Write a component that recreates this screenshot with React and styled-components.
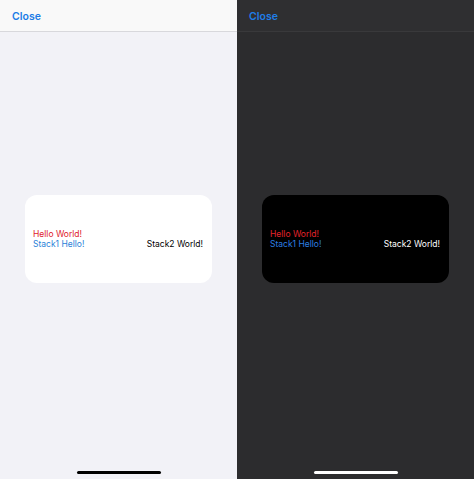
import React from 'react';
import styled, { createGlobalStyle } from 'styled-components';

const GlobalStyle = createGlobalStyle`
  html, body {
    margin: 0;
    padding: 0;
  }
  body {
    font-family: Inter, "Liberation Sans", Arial, sans-serif;
    -webkit-font-smoothing: antialiased;
  }
`

const themes = {
  light: {
    header: '#f9f9f9',
    border: '#d8d8dc',
    body: '#f2f2f7',
    card: '#ffffff',
    text: '#000000',
    red: '#e0212b',
    blue: '#2a82d8',
    link: '#1c7ce6',
    indicator: '#000000'
  },
  dark: {
    header: '#2f2f31',
    border: '#39393b',
    body: '#2c2c2e',
    card: '#000000',
    text: '#ffffff',
    red: '#e4242c',
    blue: '#2d7fe0',
    link: '#1f7ee8',
    indicator: '#ffffff'
  }
}

function Screen({ mode }) {
  const t = themes[mode]
  return (
    <Panel $bg={t.body}>
      <Header $bg={t.header} $border={t.border}>
        <CloseButton $color={t.link}>Close</CloseButton>
      </Header>
      <Content>
        <Card $bg={t.card}>
          <Stack>
            <Line $color={t.red}>Hello World!</Line>
            <Line $color={t.blue}>Stack1 Hello!</Line>
          </Stack>
          <Line $color={t.text}>Stack2 World!</Line>
        </Card>
      </Content>
      <IndicatorBar>
        <Indicator $color={t.indicator} />
      </IndicatorBar>
    </Panel>
  )
}

function App() {
  return (
    <>
      <GlobalStyle />
      <Wrapper>
        <Screen mode='light' />
        <Screen mode='dark' />
      </Wrapper>
    </>
  )
}

const Wrapper = styled.div`
  display: grid;
  grid-template-columns: 237px 237px;
  width: 474px;
  height: 479px;
  overflow: hidden;
`
const Panel = styled.div`
  display: flex;
  flex-direction: column;
  height: 479px;
  background: ${p => p.$bg};
`
const Header = styled.div`
  height: 32px;
  flex-shrink: 0;
  display: flex;
  align-items: center;
  padding-left: 12px;
  background: ${p => p.$bg};
  border-bottom: 1px solid ${p => p.$border};
  box-sizing: border-box;
`
const CloseButton = styled.span`
  font-size: 10.5px;
  font-weight: 600;
  color: ${p => p.$color};
  margin-top: 1px;
`
const Content = styled.div`
  flex: 1;
  display: flex;
  align-items: center;
  justify-content: center;
  padding-bottom: 26px;
`
const Card = styled.div`
  width: 187px;
  height: 88px;
  box-sizing: border-box;
  border-radius: 12px;
  background: ${p => p.$bg};
  display: flex;
  align-items: flex-end;
  justify-content: space-between;
  padding: 0 9px 34px 8px;
`
const Stack = styled.div`
  display: flex;
  flex-direction: column;
`
const Line = styled.span`
  font-size: 8.5px;
  line-height: 10px;
  color: ${p => p.$color};
  white-space: nowrap;
`
const IndicatorBar = styled.div`
  height: 8px;
  display: flex;
  justify-content: center;
  flex-shrink: 0;
`
const Indicator = styled.div`
  width: 84px;
  height: 3px;
  border-radius: 2px;
  background: ${p => p.$color};
`

export default App;
